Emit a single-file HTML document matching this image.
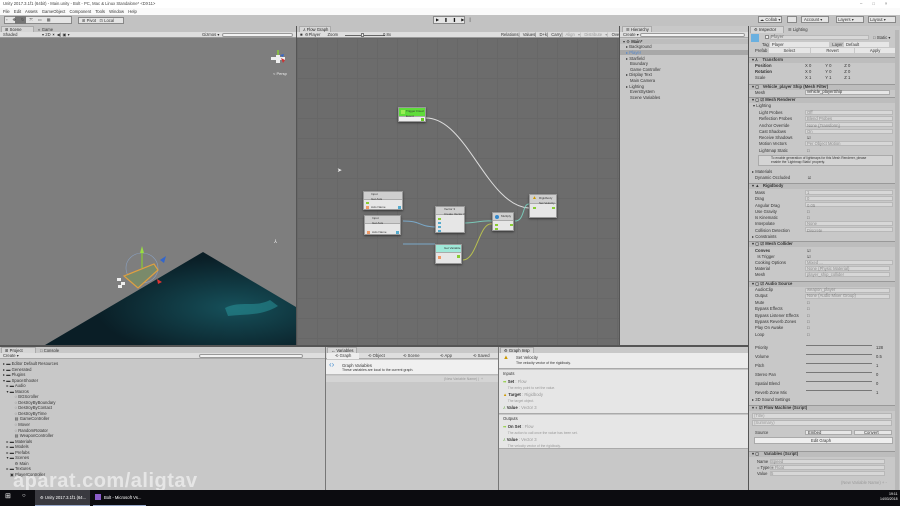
<!DOCTYPE html>
<html><head><meta charset="utf-8"><style>
*{margin:0;padding:0;box-sizing:border-box}
body{width:900px;height:506px;overflow:hidden;background:#c2c2c2;font-family:"Liberation Sans",sans-serif;position:relative;color:#222}
div,span{position:absolute}
.t{font-size:4.2px;line-height:5px;white-space:nowrap;color:#333}
.b{font-weight:bold}
.tab{height:7px;background:#d6d6d6;border:1px solid #aaa;border-bottom:none;font-size:4.2px;line-height:6px;padding-left:3px;color:#222}
.hdr{left:749px;width:146px;height:6px;background:#bdbdbd;border-top:1px solid #999}
.fld{height:4.5px;background:#e6e6e6;border:0.5px solid #aaa}
.cb{width:4px;height:4px;background:#eee;border:0.5px solid #888}
.node{background:#e6e6e6;border:1px solid #999;box-shadow:0 1px 2px rgba(0,0,0,.5)}
.nh{left:0;top:0;right:0;background:#cfcfcf;border-bottom:1px solid #aaa}
</style></head><body>
<div style="left:0;top:0;width:900px;height:8px;background:#fff"></div>
<div class="t" style="left:3px;top:1px;color:#444">Unity 2017.3.1f1 (64bit) - Main.unity - Bolt - PC, Mac &amp; Linux Standalone* &lt;DX11&gt;</div>
<div class="t" style="left:860px;top:1px;color:#666;letter-spacing:10px">–□×</div>
<div style="left:0;top:8px;width:900px;height:7px;background:#fafafa"></div>
<div class="t" style="left:3px;top:9px;color:#333;word-spacing:3px">File Edit Assets GameObject Component Tools Window Help</div>
<div style="left:0;top:15px;width:900px;height:11px;background:#c2c2c2"></div>
<div style="left:4px;top:16px;width:68px;height:8px;background:#e4e4e4;border:1px solid #888"></div>
<div style="left:15px;top:16px;width:11px;height:8px;background:#777"></div>
<div class="t" style="left:6px;top:17px;color:#444;letter-spacing:5px">▫✥↻⤧▭▦</div>
<div style="left:78px;top:17px;width:46px;height:7px;background:#e4e4e4;border:1px solid #888"></div>
<div class="t" style="left:82px;top:18px">⊞ Pivot &nbsp; ⊡ Local</div>
<div style="left:433px;top:16px;width:32px;height:8px;background:#e4e4e4;border:1px solid #888"></div>
<div class="t" style="left:436px;top:17px;color:#111;letter-spacing:5px">▶❚❚▶|</div>
<div style="left:758px;top:16px;width:24px;height:7px;background:#e4e4e4;border:1px solid #888"></div>
<div class="t" style="left:760px;top:17px">☁ Collab ▾</div>
<div style="left:787px;top:16px;width:10px;height:7px;background:#e4e4e4;border:1px solid #888"></div>
<div style="left:801px;top:16px;width:28px;height:7px;background:#e4e4e4;border:1px solid #888"></div>
<div class="t" style="left:804px;top:17px">Account ▾</div>
<div style="left:836px;top:16px;width:28px;height:7px;background:#e4e4e4;border:1px solid #888"></div>
<div class="t" style="left:838px;top:17px">Layers ▾</div>
<div style="left:868px;top:16px;width:28px;height:7px;background:#e4e4e4;border:1px solid #888"></div>
<div class="t" style="left:870px;top:17px">Layout ▾</div>

<div class="tab" style="left:1px;top:26px;width:33px">⊞ Scene</div>
<div class="t" style="left:38px;top:27px">◐ Game</div>
<div style="left:0;top:32px;width:296px;height:6px;background:#dedede;border-bottom:1px solid #999"></div>
<div class="t" style="left:3px;top:32px">Shaded</div>
<div class="t" style="left:42px;top:32px">▾ 2D ☀ ◀) ▣ ▾</div>
<div class="t" style="left:202px;top:32px">Gizmos ▾</div>
<div style="left:222px;top:33px;width:71px;height:4px;background:#f2f2f2;border:0.5px solid #999;border-radius:2px"></div>
<div style="left:0;top:38px;width:296px;height:307px;background:#7e7e7e"></div>
<svg style="position:absolute;left:0;top:38px" width="296" height="307">
<defs><radialGradient id="g1" cx="0.75" cy="0.6" r="0.55"><stop offset="0" stop-color="#16505a"/><stop offset="1" stop-color="#0a1e26"/></radialGradient></defs>
<polygon points="45,307 203,214 296,269 296,307" fill="url(#g1)"/>
<path d="M225,270 C240,262 255,270 270,262 L278,268 C262,278 245,276 228,278Z" fill="#2a9aa0" opacity=".5"/>
<ellipse cx="142" cy="230" rx="16" ry="15" fill="none" stroke="#8aa0c0" stroke-width=".6"/>
<polygon points="124,238 154,226 158,232 138,250" fill="#7a8a6a" stroke="#e0a040" stroke-width="1.2"/>
<line x1="142" y1="230" x2="142" y2="213" stroke="#8c3" stroke-width="1.2"/>
<polygon points="140,215 144,215 142,208" fill="#9d4"/>
<polygon points="157,241 162,244 158,246" fill="#d33"/>
<polygon points="160,222 166,218 164,225" fill="#36c"/>
<g fill="#eee"><rect x="117" y="240" width="4" height="3"/><rect x="121" y="244" width="4" height="3"/><rect x="118" y="247" width="4" height="3"/></g>
<g transform="translate(278,20)"><line x1="0" y1="-8" x2="0" y2="0" stroke="#8c3" stroke-width="1.5"/><rect x="-7" y="-1" width="14" height="3" fill="#eee"/><rect x="-2" y="-3" width="4" height="8" fill="#eee"/><polygon points="3,0 7,2 5,5" fill="#c33"/><polygon points="2,-3 6,-4 5,-1" fill="#36c"/></g>
<text x="273" y="37" font-size="4" fill="#eee" font-family="Liberation Sans">&lt; Persp</text>
<text x="274" y="205" font-size="5" fill="#eee" font-family="Liberation Sans">⅄</text>
</svg>
<div style="left:296px;top:26px;width:1px;height:319px;background:#555"></div>

<div class="tab" style="left:299px;top:26px;width:32px">⅄ Flow Graph</div>
<div style="left:297px;top:32px;width:322px;height:6px;background:#dedede;border-bottom:1px solid #999"></div>
<div class="t" style="left:300px;top:32px">■ &nbsp;⚙Player &nbsp;&nbsp;&nbsp;&nbsp;&nbsp;Zoom</div>
<div style="left:345px;top:35px;width:40px;height:0.8px;background:#666"></div>
<div style="left:361px;top:33px;width:3px;height:4px;background:#eee;border:0.5px solid #777"></div>
<div class="t" style="left:383px;top:32px">0.8x</div>
<div class="t" style="left:501px;top:32px;word-spacing:2px">Relations| Values| D+k| Carry| <span style="position:static;color:#999">Align ▾| Distribute ▾|</span> Overview</div>
<div style="left:297px;top:38px;width:322px;height:307px;background:#6c6c6c;background-image:linear-gradient(#676767 1px,transparent 1px),linear-gradient(90deg,#676767 1px,transparent 1px);background-size:20px 20px"></div>
<svg style="position:absolute;left:297px;top:38px" width="322" height="307">
<g fill="none" stroke-width="1">
<path d="M129,80 C170,80 190,168 232,170" stroke="#ddd"/>
<path d="M106,183 C125,183 120,188 138,189" stroke="#7aa8c8"/>
<path d="M106,206 L138,206" stroke="#7aa8c8"/>
<path d="M168,185 C180,185 185,182 195,183" stroke="#7ac8b8"/>
<path d="M166,222 C180,222 182,184 195,186" stroke="#b8c050"/>
<path d="M218,183 C228,183 225,166 232,166" stroke="#7ac8b8"/>
</g>
<text x="40" y="134" font-size="6" fill="#eee">➤</text>
</svg>
<div class="node" style="left:398px;top:107px;width:28px;height:15px;background:#eee"><div class="nh" style="height:9px;background:#5fdc3a"></div><span class="t" style="left:7px;top:1px;font-size:3px">Trigger Fixed<br>Event</span><span style="left:2px;top:2px;width:4px;height:4px;background:#9e5"></span><span style="left:22px;top:10px;width:3px;height:3px;background:#6c2"></span></div>
<div class="node" style="left:363px;top:191px;width:40px;height:19px"><div class="nh" style="height:8px"></div><span class="t" style="left:7px;top:0px;font-size:3px">Input<br>Get Axis</span><span style="left:2px;top:10px;width:3px;height:2px;background:#8c3"></span><span style="left:2px;top:14px;width:3px;height:3px;background:#e96"></span><span class="t" style="left:7px;top:13px;font-size:3px">Axis Name</span><span style="left:34px;top:14px;width:3px;height:3px;background:#5ac"></span></div>
<div class="node" style="left:364px;top:215px;width:37px;height:20px"><div class="nh" style="height:8px"></div><span class="t" style="left:7px;top:0px;font-size:3px">Input<br>Get Axis</span><span style="left:2px;top:15px;width:3px;height:3px;background:#e96"></span><span class="t" style="left:7px;top:14px;font-size:3px">Axis Name</span><span style="left:31px;top:15px;width:3px;height:3px;background:#5ac"></span></div>
<div class="node" style="left:435px;top:206px;width:30px;height:27px"><div class="nh" style="height:8px"></div><span class="t" style="left:8px;top:0;font-size:3px">Vector 3<br>Create Vector 3</span><span style="left:2px;top:11px;width:3px;height:2px;background:#8c3"></span><span style="left:2px;top:15px;width:3px;height:2px;background:#5ac"></span><span style="left:2px;top:19px;width:3px;height:2px;background:#5ac"></span><span style="left:2px;top:23px;width:3px;height:2px;background:#5ac"></span></div>
<div class="node" style="left:492px;top:212px;width:22px;height:19px"><div class="nh" style="height:8px"></div><span style="left:2px;top:2px;width:4px;height:4px;border-radius:50%;background:#38c"></span><span class="t" style="left:8px;top:1px;font-size:3px">Multiply</span><span style="left:2px;top:11px;width:3px;height:2px;background:#8c3"></span><span style="left:2px;top:15px;width:3px;height:2px;background:#8c3"></span><span style="left:17px;top:11px;width:3px;height:2px;background:#8c3"></span></div>
<div class="node" style="left:529px;top:194px;width:28px;height:24px"><div class="nh" style="height:9px"></div><span class="t" style="left:2px;top:1px;font-size:5px;color:#c90">▲</span><span class="t" style="left:9px;top:1px;font-size:3px">Rigidbody<br>Set Velocity</span><span style="left:3px;top:12px;width:3px;height:2px;background:#8c3"></span><span style="left:22px;top:12px;width:3px;height:2px;background:#8c3"></span></div>
<div class="node" style="left:435px;top:244px;width:27px;height:20px"><div class="nh" style="height:8px;background:#9fe8d8"></div><span class="t" style="left:8px;top:1px;font-size:3px">Get Variable</span><span style="left:2px;top:11px;width:3px;height:3px;background:#e96"></span><span style="left:21px;top:10px;width:3px;height:3px;background:#8c3"></span></div>
<div style="left:619px;top:26px;width:1px;height:319px;background:#555"></div>

<div style="left:620px;top:26px;width:128px;height:319px;background:#c8c8c8"></div>
<div class="tab" style="left:622px;top:26px;width:30px">☰ Hierarchy</div>
<div style="left:620px;top:32px;width:128px;height:6px;background:#dedede;border-bottom:1px solid #aaa"></div>
<div class="t" style="left:623px;top:32px">Create ▾</div>
<div style="left:640px;top:33px;width:105px;height:4px;background:#f2f2f2;border:0.5px solid #999;border-radius:2px"></div>
<div style="left:620px;top:39px;width:128px;height:5px;background:#bdbdbd"></div>
<div class="t" style="left:623px;top:39px">▾ ⚙ <b>Main*</b></div>
<div class="t" style="left:626px;top:44px">▸ Background</div>
<div style="left:620px;top:50px;width:128px;height:5px;background:#a8a8a8"></div>
<div class="t" style="left:626px;top:50px;color:#58c">▸ Player</div>
<div class="t" style="left:626px;top:56px">▸ Starfield</div>
<div class="t" style="left:630px;top:61px">Boundary</div>
<div class="t" style="left:630px;top:67px">Game Controller</div>
<div class="t" style="left:626px;top:72px">▸ Display Text</div>
<div class="t" style="left:630px;top:78px">Main Camera</div>
<div class="t" style="left:626px;top:84px">▸ Lighting</div>
<div class="t" style="left:630px;top:89px">EventSystem</div>
<div class="t" style="left:630px;top:95px">Scene Variables</div>
<div style="left:748px;top:26px;width:1px;height:464px;background:#555"></div>

<div style="left:749px;top:26px;width:151px;height:464px;background:#c8c8c8"></div>
<div class="tab" style="left:750px;top:26px;width:34px">⚙ Inspector</div>
<div class="t" style="left:788px;top:27px">☰ Lighting</div>
<div style="left:751px;top:34px;width:8px;height:8px;background:#6ab0e0"></div>
<div class="cb" style="left:765px;top:35px"></div>
<div class="t b" style="left:771px;top:34px">Player</div>
<div class="fld" style="left:770px;top:35px;width:99px;opacity:.5"></div>
<div class="t" style="left:873px;top:35px">□ Static ▾</div>
<div class="t" style="left:762px;top:42px">Tag <span style="position:static;background:#e6e6e6;padding:0 45px 0 2px">Player</span> &nbsp;&nbsp;Layer <span style="position:static;background:#e6e6e6;padding:0 30px 0 2px">Default</span></div>
<div class="t" style="left:755px;top:48px">Prefab <span style="position:static;background:#e6e6e6;padding:0 15px">Select</span> <span style="position:static;background:#e6e6e6;padding:0 15px">Revert</span> <span style="position:static;background:#e6e6e6;padding:0 15px">Apply</span></div>
<div class="hdr" style="top:57px"></div><div class="t b" style="left:752px;top:57px">▾ ⅄ &nbsp;&nbsp;&nbsp;Transform</div>
<div class="t b" style="left:755px;top:63px">Position</div><div class="t" style="left:805px;top:63px">X 0 &nbsp;&nbsp;&nbsp;&nbsp;&nbsp;&nbsp;&nbsp;&nbsp;&nbsp;&nbsp;&nbsp;Y 0 &nbsp;&nbsp;&nbsp;&nbsp;&nbsp;&nbsp;&nbsp;&nbsp;&nbsp;&nbsp;Z 0</div>
<div class="t b" style="left:755px;top:69px">Rotation</div><div class="t" style="left:805px;top:69px">X 0 &nbsp;&nbsp;&nbsp;&nbsp;&nbsp;&nbsp;&nbsp;&nbsp;&nbsp;&nbsp;&nbsp;Y 0 &nbsp;&nbsp;&nbsp;&nbsp;&nbsp;&nbsp;&nbsp;&nbsp;&nbsp;&nbsp;Z 0</div>
<div class="t" style="left:755px;top:75px">Scale</div><div class="t" style="left:805px;top:75px">X 1 &nbsp;&nbsp;&nbsp;&nbsp;&nbsp;&nbsp;&nbsp;&nbsp;&nbsp;&nbsp;&nbsp;Y 1 &nbsp;&nbsp;&nbsp;&nbsp;&nbsp;&nbsp;&nbsp;&nbsp;&nbsp;&nbsp;Z 1</div>
<div class="hdr" style="top:84px"></div><div class="t b" style="left:752px;top:84px">▾ ▢ &nbsp;&nbsp;Vehicle_player Ship (Mesh Filter)</div>
<div class="t" style="left:755px;top:90px">Mesh</div><div class="fld" style="left:805px;top:90px;width:85px"></div><div class="t" style="left:807px;top:89px">vehicle_playerShip</div>
<div class="hdr" style="top:97px"></div><div class="t b" style="left:752px;top:97px">▾ ▢ ☑ Mesh Renderer</div>
<div class="t" style="left:753px;top:103px">▾ Lighting</div>
<div class="t" style="left:759px;top:110px;line-height:6.3px">Light Probes<br>Reflection Probes<br>Anchor Override<br>Cast Shadows<br>Receive Shadows<br>Motion Vectors<br>Lightmap Static</div>
<div class="t" style="left:807px;top:110px;line-height:6.3px">Off<br>Blend Probes<br>None (Transform)<br>On<br>☑<br>Per Object Motion<br>□</div>
<div class="fld" style="left:805px;top:110px;width:88px;opacity:.5"></div>
<div class="fld" style="left:805px;top:116px;width:88px;opacity:.5"></div>
<div class="fld" style="left:805px;top:122px;width:88px;opacity:.5"></div>
<div class="fld" style="left:805px;top:129px;width:88px;opacity:.5"></div>
<div class="fld" style="left:805px;top:141px;width:88px;opacity:.5"></div>
<div style="left:758px;top:155px;width:135px;height:11px;background:#d4d4d4;border:0.5px solid #aaa"></div>
<div class="t" style="left:771px;top:156px;font-size:3.3px;line-height:4px">To enable generation of lightmaps for this Mesh Renderer, please<br>enable the 'Lightmap Static' property.</div>
<div class="t" style="left:752px;top:169px">▸ Materials</div>
<div class="t" style="left:755px;top:175px">Dynamic Occluded &nbsp;&nbsp;&nbsp;&nbsp;&nbsp;&nbsp;&nbsp;&nbsp;&nbsp;&nbsp;&nbsp;&nbsp;&nbsp;&nbsp;☑</div>
<div class="hdr" style="top:183px"></div><div class="t b" style="left:752px;top:183px">▾ ▲ &nbsp;&nbsp;Rigidbody</div>
<div class="t" style="left:755px;top:190px;line-height:6.3px">Mass<br>Drag<br>Angular Drag<br>Use Gravity<br>Is Kinematic<br>Interpolate<br>Collision Detection</div>
<div class="t" style="left:807px;top:190px;line-height:6.3px">1<br>0<br>0.05<br>□<br>□<br>None<br>Discrete</div>
<div class="fld" style="left:805px;top:190px;width:88px;opacity:.5"></div>
<div class="fld" style="left:805px;top:196px;width:88px;opacity:.5"></div>
<div class="fld" style="left:805px;top:202px;width:88px;opacity:.5"></div>
<div class="fld" style="left:805px;top:221px;width:88px;opacity:.5"></div>
<div class="fld" style="left:805px;top:227px;width:88px;opacity:.5"></div>
<div class="t" style="left:752px;top:234px">▸ Constraints</div>
<div class="hdr" style="top:241px"></div><div class="t b" style="left:752px;top:241px">▾ ▢ ☑ Mesh Collider</div>
<div class="t" style="left:755px;top:248px;line-height:6px"><b>Convex</b><br>&nbsp;&nbsp;Is Trigger<br>Cooking Options<br>Material<br>Mesh</div>
<div class="t" style="left:807px;top:248px;line-height:6px">☑<br>☑<br>Mixed ...<br>None (Physic Material)<br>player_ship_collider</div>
<div class="fld" style="left:805px;top:260px;width:88px;opacity:.5"></div>
<div class="fld" style="left:805px;top:266px;width:85px;opacity:.5"></div>
<div class="fld" style="left:805px;top:272px;width:85px;opacity:.5"></div>
<div class="hdr" style="top:281px"></div><div class="t b" style="left:752px;top:281px">▾ ▢ ☑ Audio Source</div>
<div class="t" style="left:755px;top:287px;line-height:6.4px">AudioClip<br>Output<br>Mute<br>Bypass Effects<br>Bypass Listener Effects<br>Bypass Reverb Zones<br>Play On Awake<br>Loop</div>
<div class="t" style="left:807px;top:287px;line-height:6.4px">weapon_player<br>None (Audio Mixer Group)<br>□<br>□<br>□<br>□<br>□<br>□</div>
<div class="fld" style="left:805px;top:288px;width:85px;opacity:.5"></div>
<div class="fld" style="left:805px;top:294px;width:85px;opacity:.5"></div>
<div class="t" style="left:755px;top:343px;line-height:9px">Priority<br>Volume<br>Pitch<br>Stereo Pan<br>Spatial Blend<br>Reverb Zone Mix</div>
<div style="left:806px;top:345px;width:66px;height:.7px;background:#777"></div>
<div style="left:806px;top:354px;width:66px;height:.7px;background:#777"></div>
<div style="left:806px;top:363px;width:66px;height:.7px;background:#777"></div>
<div style="left:806px;top:372px;width:66px;height:.7px;background:#777"></div>
<div style="left:806px;top:381px;width:66px;height:.7px;background:#777"></div>
<div style="left:806px;top:390px;width:66px;height:.7px;background:#777"></div>
<div class="t" style="left:876px;top:343px;line-height:9px">128<br>0.5<br>1<br>0<br>0<br>1</div>
<div class="t" style="left:752px;top:397px">▸ 3D Sound Settings</div>
<div class="hdr" style="top:405px"></div><div class="t b" style="left:752px;top:405px">▾ ◐ ☑ Flow Machine (Script)</div>
<div class="fld" style="left:752px;top:413px;width:140px;height:6px;opacity:.6"></div><div class="t" style="left:754px;top:413px;color:#999">(Title)</div>
<div class="fld" style="left:752px;top:420px;width:140px;height:6px;opacity:.6"></div><div class="t" style="left:754px;top:420px;color:#999">(Summary)</div>
<div class="t" style="left:755px;top:430px">Source</div>
<div class="fld" style="left:805px;top:430px;width:47px;height:5px"></div><div class="t" style="left:808px;top:430px">Embed</div>
<div class="fld" style="left:854px;top:430px;width:38px;height:5px"></div><div class="t" style="left:864px;top:430px">Convert</div>
<div class="fld" style="left:754px;top:437px;width:139px;height:7px;background:#eee"></div><div class="t" style="left:811px;top:438px">Edit Graph</div>
<div class="hdr" style="top:451px"></div><div class="t b" style="left:752px;top:451px">▾ ▢ &nbsp;&nbsp;&nbsp;Variables (Script)</div>
<div class="t" style="left:757px;top:459px;line-height:6px">Name<br>= Type<br>Value</div>
<div class="t" style="left:771px;top:459px;line-height:6px">Speed<br>■ Float<br>5</div>
<div class="fld" style="left:770px;top:459px;width:115px;opacity:.5"></div>
<div class="fld" style="left:770px;top:465px;width:115px;opacity:.5"></div>
<div class="fld" style="left:770px;top:471px;width:115px;opacity:.5"></div>
<div class="t" style="left:841px;top:480px;color:#999">(New Variable Name) + -</div>
<div style="left:895px;top:30px;width:4px;height:460px;background:#b8b8b8"></div>

<div style="left:0;top:345px;width:748px;height:2px;background:#555"></div>
<div style="left:0;top:347px;width:325px;height:143px;background:#c8c8c8"></div>
<div class="tab" style="left:1px;top:347px;width:35px">⊞ Project</div>
<div class="t" style="left:40px;top:348px">□ Console</div>
<div style="left:0;top:353px;width:325px;height:6px;background:#dedede;border-bottom:1px solid #aaa"></div>
<div class="t" style="left:3px;top:353px">Create ▾</div>
<div style="left:199px;top:354px;width:104px;height:4px;background:#f2f2f2;border:0.5px solid #999;border-radius:2px"></div>
<div class="t" style="left:3px;top:361px;line-height:5.55px">▸ ▬ Editor Default Resources<br>▸ ▬ Generated<br>▸ ▬ Plugins<br>▾ ▬ SpaceShooter<br>&nbsp;&nbsp;&nbsp;▸ ▬ Audio<br>&nbsp;&nbsp;&nbsp;▾ ▬ Macros<br>&nbsp;&nbsp;&nbsp;&nbsp;&nbsp;&nbsp;&nbsp;&nbsp;&nbsp;&nbsp;◌ BGScroller<br>&nbsp;&nbsp;&nbsp;&nbsp;&nbsp;&nbsp;&nbsp;&nbsp;&nbsp;&nbsp;◌ DestroyByBoundary<br>&nbsp;&nbsp;&nbsp;&nbsp;&nbsp;&nbsp;&nbsp;&nbsp;&nbsp;&nbsp;◌ DestroyByContact<br>&nbsp;&nbsp;&nbsp;&nbsp;&nbsp;&nbsp;&nbsp;&nbsp;&nbsp;&nbsp;◌ DestroyByTime<br>&nbsp;&nbsp;&nbsp;&nbsp;&nbsp;&nbsp;&nbsp;&nbsp;&nbsp;&nbsp;▤ GameController<br>&nbsp;&nbsp;&nbsp;&nbsp;&nbsp;&nbsp;&nbsp;&nbsp;&nbsp;&nbsp;◌ Mover<br>&nbsp;&nbsp;&nbsp;&nbsp;&nbsp;&nbsp;&nbsp;&nbsp;&nbsp;&nbsp;◌ RandomRotator<br>&nbsp;&nbsp;&nbsp;&nbsp;&nbsp;&nbsp;&nbsp;&nbsp;&nbsp;&nbsp;▤ WeaponController<br>&nbsp;&nbsp;&nbsp;▸ ▬ Materials<br>&nbsp;&nbsp;&nbsp;▸ ▬ Models<br>&nbsp;&nbsp;&nbsp;▸ ▬ Prefabs<br>&nbsp;&nbsp;&nbsp;▾ ▬ Scenes<br>&nbsp;&nbsp;&nbsp;&nbsp;&nbsp;&nbsp;&nbsp;&nbsp;&nbsp;&nbsp;⚙ Main<br>&nbsp;&nbsp;&nbsp;▸ ▬ Textures<br>&nbsp;&nbsp;&nbsp;&nbsp;&nbsp;&nbsp;▣ PlayerController</div>
<div style="left:325px;top:347px;width:1px;height:143px;background:#777"></div>
<div style="left:326px;top:347px;width:172px;height:143px;background:#c8c8c8"></div>
<div class="tab" style="left:327px;top:347px;width:30px">↔ Variables</div>
<div style="left:326px;top:353px;width:172px;height:6px;background:#dedede;border-bottom:1px solid #aaa"></div>
<div style="left:327px;top:353px;width:32px;height:6px;background:#eee"></div>
<div class="t" style="left:335px;top:353px">⟲ Graph</div>
<div class="t" style="left:368px;top:353px">⟲ Object</div>
<div class="t" style="left:403px;top:353px">⟲ Scene</div>
<div class="t" style="left:440px;top:353px">⟲ App</div>
<div class="t" style="left:473px;top:353px">⟲ Saved</div>
<div style="left:326px;top:360px;width:172px;height:15px;background:#f0f0f0;border-bottom:1px solid #bbb"></div>
<div class="t" style="left:329px;top:362px;font-size:8px;color:#4a90d0">‹›</div>
<div class="t" style="left:342px;top:363px">Graph Variables</div>
<div class="t" style="left:342px;top:368px;font-size:3.5px">These variables are local to the current graph.</div>
<div style="left:326px;top:376px;width:172px;height:6px;background:#d4d4d4"></div>
<div class="t" style="left:444px;top:377px;color:#999;font-size:3.5px">(New Variable Name) |&nbsp; +</div>
<div style="left:498px;top:347px;width:1px;height:143px;background:#777"></div>
<div style="left:499px;top:347px;width:249px;height:143px;background:#c8c8c8"></div>
<div class="tab" style="left:500px;top:347px;width:34px">⚙ Graph Insp</div>
<div style="left:499px;top:353px;width:249px;height:16px;background:#ececec;border-bottom:1px solid #aaa"></div>
<div class="t" style="left:503px;top:356px;font-size:6px;color:#c90">▲</div>
<div class="t" style="left:516px;top:355px">Set Velocity</div>
<div class="t" style="left:516px;top:361px;font-size:3.5px">The velocity vector of the rigidbody.</div>
<div style="left:499px;top:370px;width:249px;height:44px;background:#e6e6e6;border-bottom:1px solid #aaa"></div>
<div class="t" style="left:503px;top:371px">Inputs</div>
<div class="t" style="left:503px;top:379px;line-height:6.4px"><span style="position:static;color:#8c3">➡</span> <b>Set</b> <span style="position:static;color:#999">: Flow</span><br><span style="position:static;color:#999;font-size:3.4px">&nbsp;&nbsp;&nbsp;&nbsp;&nbsp;The entry point to set the value.</span><br><span style="position:static;color:#c90">▲</span> <b>Target</b> <span style="position:static;color:#999">: Rigidbody</span><br><span style="position:static;color:#999;font-size:3.4px">&nbsp;&nbsp;&nbsp;&nbsp;&nbsp;The target object.</span><br><span style="position:static;color:#6a4">⅄</span> <b>Value</b> <span style="position:static;color:#999">: Vector 3</span></div>
<div style="left:499px;top:415px;width:249px;height:34px;background:#e6e6e6;border-bottom:1px solid #aaa"></div>
<div class="t" style="left:503px;top:416px">Outputs</div>
<div class="t" style="left:503px;top:424px;line-height:6.4px"><span style="position:static;color:#8c3">➡</span> <b>On Set</b> <span style="position:static;color:#999">: Flow</span><br><span style="position:static;color:#999;font-size:3.4px">&nbsp;&nbsp;&nbsp;&nbsp;&nbsp;The action to call once the value has been set.</span><br><span style="position:static;color:#6a4">⅄</span> <b>Value</b> <span style="position:static;color:#999">: Vector 3</span><br><span style="position:static;color:#999;font-size:3.4px">&nbsp;&nbsp;&nbsp;&nbsp;&nbsp;The velocity vector of the rigidbody.</span></div>

<div style="left:13px;top:470px;font-size:20px;line-height:22px;font-weight:bold;color:rgba(255,255,255,.55);white-space:nowrap;letter-spacing:0.5px">aparat.com/aligtav</div>
<div style="left:0;top:490px;width:900px;height:16px;background:#0c0c10"></div>
<div class="t" style="left:5px;top:494px;color:#fff;font-size:7px">⊞</div>
<div class="t" style="left:22px;top:494px;color:#fff;font-size:6px">○</div>
<div style="left:35px;top:490px;width:55px;height:16px;background:#3a3a40;border-bottom:1px solid #9ac"></div>
<div class="t" style="left:40px;top:495px;color:#fff">⚙ Unity 2017.3.1f1 (64...</div>
<div style="left:93px;top:490px;width:53px;height:16px;border-bottom:1px solid #9ac"></div>
<div style="left:95px;top:494px;width:6px;height:6px;background:#8a5cc8"></div>
<div class="t" style="left:104px;top:495px;color:#fff">Bolt - Microsoft Vs...</div>
<div class="t" style="left:880px;top:492px;color:#fff;font-size:3.5px;line-height:5px;text-align:right">19:11<br>14/03/2018</div>
</body></html>
